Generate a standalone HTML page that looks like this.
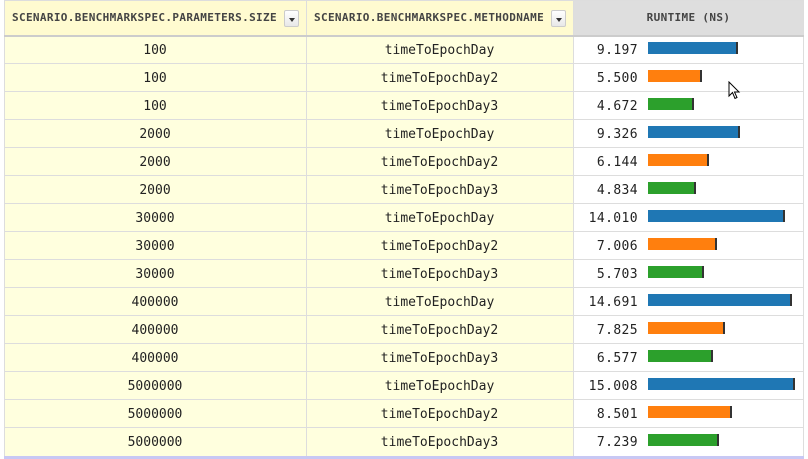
<!DOCTYPE html>
<html><head><style>
body{margin:0;width:808px;height:459px;background:#fff;position:relative;overflow:hidden;font-family:"DejaVu Sans Mono","Liberation Mono",monospace;}
.a{position:absolute;box-sizing:border-box}
.hd{font-size:11px;letter-spacing:0.35px;font-weight:bold;color:#444;line-height:36px;top:0;height:36px}
.btn{position:absolute;width:15px;height:17px;top:10px;border:1px solid #ccc;border-radius:2px;background:linear-gradient(#fff,#e8e8e8);box-sizing:border-box}
.btn:after{content:"";position:absolute;left:4px;top:7px;border-left:3px solid transparent;border-right:3px solid transparent;border-top:4px solid #333}
.c{font-size:13px;color:#222;text-align:center;line-height:30px}
.n{font-size:13px;letter-spacing:0.4px;color:#222;text-align:right;line-height:30px}
.bar{position:absolute;height:12px}
.e{position:absolute;width:2px;height:12px;background:#333}
</style></head><body>
<div class="a" style="left:4px;top:0;width:302px;height:36px;background:#fffbd0"></div>
<div class="a" style="left:306px;top:0;width:267px;height:36px;background:#fffbd0"></div>
<div class="a" style="left:573px;top:0;width:231px;height:36px;background:#dedede"></div>
<div class="a" style="left:4px;top:36px;width:569px;height:420px;background:#ffffde"></div>
<div class="a" style="left:4px;top:456px;width:800px;height:3px;background:#c8c8f4"></div>
<div class="a hd" style="left:12px">SCENARIO.BENCHMARKSPEC.PARAMETERS.SIZE</div>
<div class="btn" style="left:284px"></div>
<div class="a hd" style="left:314px">SCENARIO.BENCHMARKSPEC.METHODNAME</div>
<div class="btn" style="left:551px"></div>
<div class="a hd" style="left:573px;width:231px;text-align:center">RUNTIME (NS)</div>
<div id="g"></div>
<div class="a" style="left:4px;top:0;width:1px;height:456px;background:#ddd"></div>
<div class="a" style="left:306px;top:0;width:1px;height:456px;background:#ddd"></div>
<div class="a" style="left:573px;top:0;width:1px;height:456px;background:#ddd"></div>
<div class="a" style="left:803px;top:0;width:1px;height:456px;background:#ddd"></div>
<div class="a" style="left:4px;top:0;width:800px;height:1px;background:#ddd"></div>
<div class="a" style="left:4px;top:35px;width:800px;height:2px;background:#ccc"></div>
<script>
var d=[["100","timeToEpochDay","9.197",0],["100","timeToEpochDay2","5.500",1],["100","timeToEpochDay3","4.672",2],["2000","timeToEpochDay","9.326",0],["2000","timeToEpochDay2","6.144",1],["2000","timeToEpochDay3","4.834",2],["30000","timeToEpochDay","14.010",0],["30000","timeToEpochDay2","7.006",1],["30000","timeToEpochDay3","5.703",2],["400000","timeToEpochDay","14.691",0],["400000","timeToEpochDay2","7.825",1],["400000","timeToEpochDay3","6.577",2],["5000000","timeToEpochDay","15.008",0],["5000000","timeToEpochDay2","8.501",1],["5000000","timeToEpochDay3","7.239",2]];
var col=["#1f77b4","#ff7f0e","#2ca02c"],h="";
d.forEach(function(r,i){var t=36+i*28;var w=Math.round(parseFloat(r[2])*9.72);
h+='<div class="a c" style="left:4px;top:'+t+'px;width:302px">'+r[0]+'</div>';
h+='<div class="a c" style="left:306px;top:'+t+'px;width:267px">'+r[1]+'</div>';
h+='<div class="a n" style="left:573px;top:'+t+'px;width:65px">'+r[2]+'</div>';
h+='<div class="bar" style="left:648px;top:'+(t+6)+'px;width:'+w+'px;background:'+col[r[3]]+'"></div>';
h+='<div class="e" style="left:'+(647+w)+'px;top:'+(t+6)+'px"></div>';
if(i<14)h+='<div class="a" style="left:4px;top:'+(t+27)+'px;width:800px;height:1px;background:#ddd"></div>';});
document.getElementById("g").innerHTML=h;
</script>
<svg class="a" style="left:728px;top:81px" width="14" height="20" viewBox="0 0 14 20"><path d="M1 1 L1 15 L4.5 11.5 L7 17.5 L9 16.5 L6.5 11 L11 11 Z" fill="#fff" stroke="#000" stroke-width="1"/></svg>
</body></html>
